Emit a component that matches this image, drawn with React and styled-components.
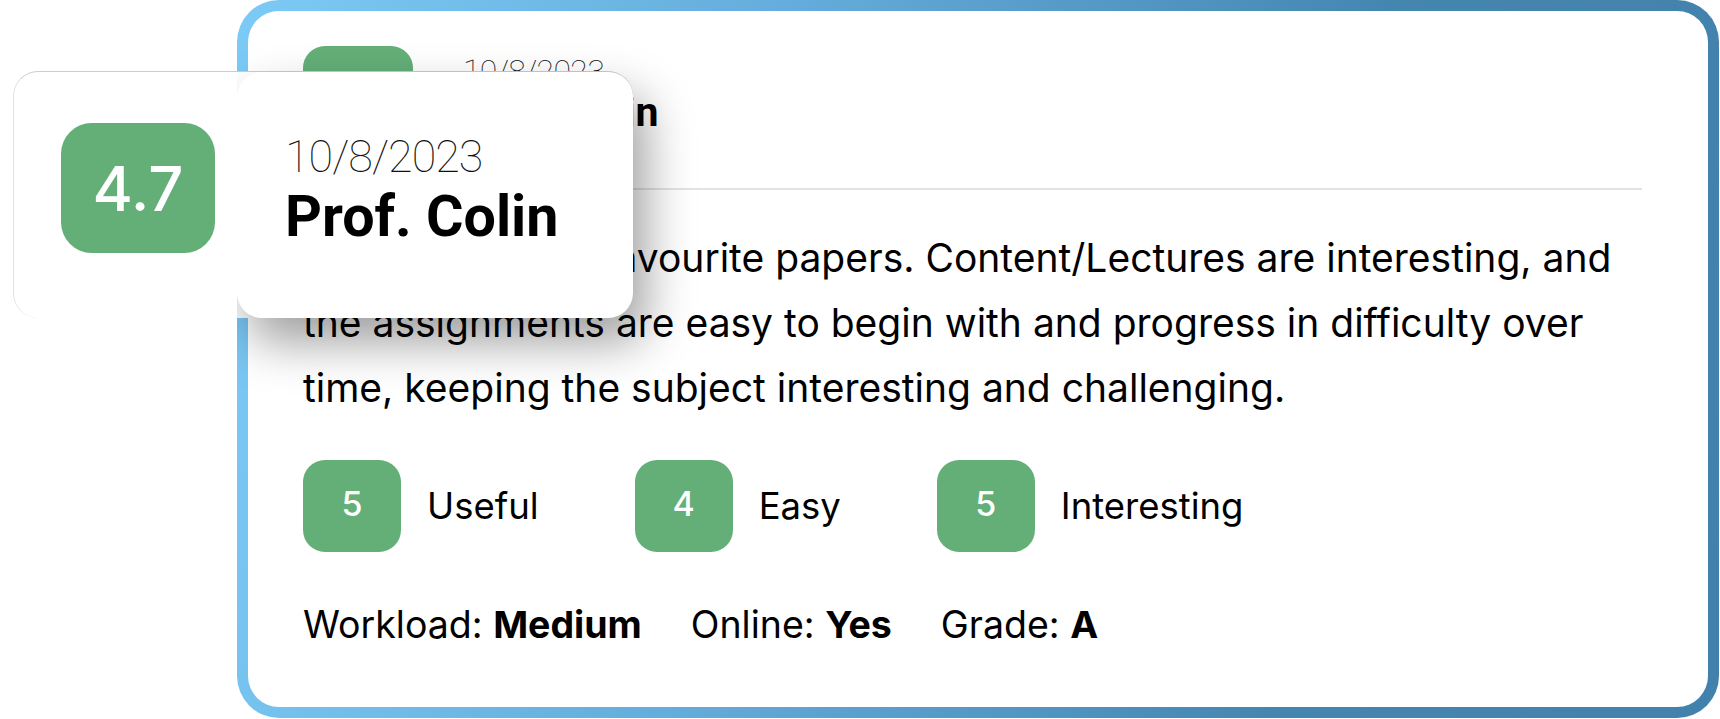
import React from "react";
import styled, { createGlobalStyle } from "styled-components";

const GlobalStyle = createGlobalStyle`
  html, body {
    margin: 0;
    padding: 0;
    background: #ffffff;
  }
  body {
    font-family: Inter, "Liberation Sans", sans-serif;
    color: #000000;
  }
`;

const Stage = styled.div`
  position: relative;
  width: 1720px;
  height: 719px;
  overflow: hidden;
  display: flex;
  justify-content: flex-end;
  padding-right: 1px;
  box-sizing: border-box;
`;

const Frame = styled.div`
  width: 1482px;
  height: 718px;
  box-sizing: border-box;
  padding: 11px;
  border-radius: 42px;
  background: linear-gradient(100deg, #7ccaf6 0%, #64acdb 35%, #4586b1 72%, #4281ab 100%);
`;

const Sheet = styled.div`
  height: 100%;
  box-sizing: border-box;
  background: #ffffff;
  border-radius: 31px;
  padding: 35px 66px 0 55px;
`;

// header is drawn twice: in the card and magnified in the floating card
const HeaderRow = styled.div`
  display: flex;
  align-items: flex-start;
  gap: ${(p) => 50 * p.$scale}px;
`;

const ScoreBadge = styled.div`
  flex: none;
  width: ${(p) => 110 * p.$scale}px;
  height: ${(p) => 93 * p.$scale}px;
  border-radius: ${(p) => 22 * p.$scale}px;
  background: #64af78;
  color: #ffffff;
  display: flex;
  align-items: center;
  justify-content: center;
  font-family: Inter, sans-serif;
  font-weight: 500;
  font-size: ${(p) => 44 * p.$scale}px;
`;

const Meta = styled.div`
  display: flex;
  flex-direction: column;
  padding-top: ${(p) => 8.6 * p.$scale}px;
`;

const DateText = styled.div`
  font-family: Roboto, "Liberation Sans", sans-serif;
  font-weight: 100;
  font-size: ${(p) => 32 * p.$scale}px;
  letter-spacing: -0.021em;
  line-height: 1;
  color: #111111;
`;

const NameText = styled.div`
  font-family: Roboto, "Liberation Sans", sans-serif;
  font-weight: 700;
  font-size: ${(p) => 41 * p.$scale}px;
  line-height: 1;
  margin-top: ${(p) => 5.5 * p.$scale}px;
  white-space: nowrap;
`;

const Divider = styled.div`
  height: 2px;
  background: #e3e3e3;
  margin-top: 49px;
`;

const Body = styled.p`
  margin: 35px 0 0;
  font-size: 39px;
  line-height: 65px;
`;

const Ratings = styled.div`
  display: flex;
  gap: 96px;
  margin-top: 40px;
`;

const RatingItem = styled.div`
  display: flex;
  align-items: center;
  gap: 26px;
`;

const SmallBadge = styled.div`
  width: 98px;
  height: 92px;
  border-radius: 22px;
  background: #64af78;
  color: #ffffff;
  display: flex;
  align-items: center;
  justify-content: center;
  padding-bottom: 6px;
  box-sizing: border-box;
  font-size: 34px;
  font-weight: 500;
`;

const RatingLabel = styled.span`
  font-size: 36.5px;
`;

const Facts = styled.div`
  display: flex;
  gap: 49px;
  margin-top: 53px;
  font-size: 37.5px;
  line-height: 40px;
`;

const Fact = styled.span`
  b {
    font-weight: 700;
  }
`;

const FloatCard = styled.div`
  position: absolute;
  left: 13px;
  top: 71px;
  width: 620px;
  height: 247px;
  box-sizing: border-box;
  padding: 51px 0 0 47px;
  background: #ffffff;
  border-radius: 25px;
  border-top: 1px solid #cdcdcd;
  border-left: 1px solid #e2e2e2;
  z-index: 2;

  &::before {
    content: "";
    position: absolute;
    left: 223px;
    top: 0;
    right: 0;
    bottom: 0;
    border-radius: 25px;
    box-shadow: 12px 24px 48px rgba(0, 0, 0, 0.38);
    clip-path: inset(-200px -200px -200px 0);
    z-index: -1;
  }
`;

const Header = ({ scale, score, date, name }) => (
  <HeaderRow $scale={scale}>
    <ScoreBadge $scale={scale}>{score}</ScoreBadge>
    <Meta $scale={scale}>
      <DateText $scale={scale}>{date}</DateText>
      <NameText $scale={scale}>{name}</NameText>
    </Meta>
  </HeaderRow>
);

const ratings = [
  { value: 5, label: "Useful" },
  { value: 4, label: "Easy" },
  { value: 5, label: "Interesting" },
];

export default function App() {
  return (
    <>
      <GlobalStyle />
      <Stage>
        <Frame>
          <Sheet>
            <Header scale={1} score="4.7" date="10/8/2023" name="Prof. Colin" />
            <Divider />
            <Body>
              Truly one of my favourite papers. Content/Lectures are interesting, and the
              assignments are easy to begin with and progress in difficulty over time, keeping
              the subject interesting and challenging.
            </Body>
            <Ratings>
              {ratings.map((r) => (
                <RatingItem key={r.label}>
                  <SmallBadge>{r.value}</SmallBadge>
                  <RatingLabel>{r.label}</RatingLabel>
                </RatingItem>
              ))}
            </Ratings>
            <Facts>
              <Fact>
                Workload: <b>Medium</b>
              </Fact>
              <Fact>
                Online: <b>Yes</b>
              </Fact>
              <Fact>
                Grade: <b>A</b>
              </Fact>
            </Facts>
          </Sheet>
        </Frame>
        <FloatCard>
          <Header scale={1.4} score="4.7" date="10/8/2023" name="Prof. Colin" />
        </FloatCard>
      </Stage>
    </>
  );
}
